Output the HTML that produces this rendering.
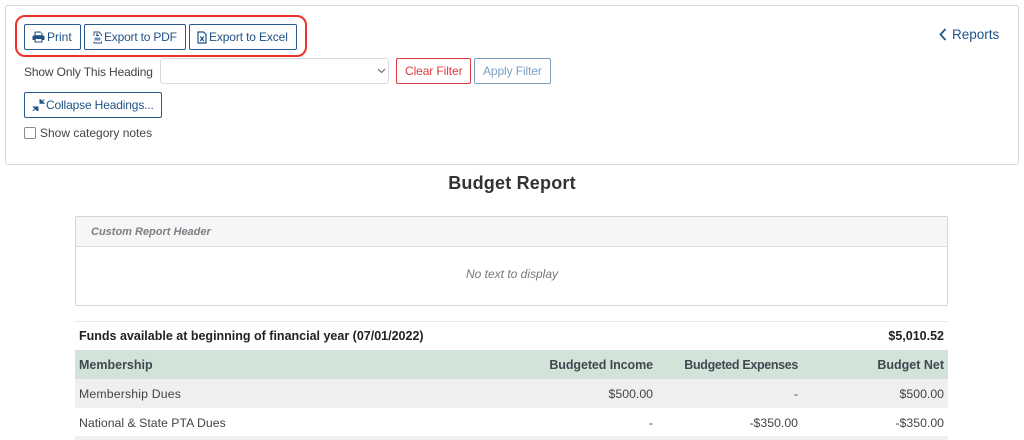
<!DOCTYPE html>
<html><head><meta charset="utf-8"><style>
html,body{margin:0;padding:0;background:#fff}
body{width:1024px;height:440px;overflow:hidden;position:relative;font-family:"Liberation Sans",sans-serif;font-size:12px;color:#333}
.a{position:absolute;box-sizing:border-box}
.t{position:absolute;white-space:nowrap;line-height:16px}
.btn{position:absolute;box-sizing:border-box;height:26px;border:1px solid #2a5a8c;border-radius:2px;color:#1f5287;background:#fff;line-height:24px;white-space:nowrap}
.r{text-align:right}
.b{font-weight:bold}
.h{font-size:12.5px;color:#3f4a50}
.c{font-size:12.3px;color:#444}
svg{position:absolute}
</style></head><body>
<div class="a" style="left:5px;top:5px;width:1014px;height:160px;border:1px solid #d9d9d9;border-radius:3px"></div>
<div class="a" style="left:15px;top:15px;width:292px;height:42px;border:2px solid #f0302a;border-radius:10px"></div>

<div class="btn" style="left:24px;top:24px;width:57px"><span class="t" style="left:22px;top:4px">Print</span>
<svg style="left:7px;top:6px" width="13" height="12" viewBox="0 0 13 12"><path d="M2.500 5V1.500a1 1 0 0 1 1-1h5l2 2V5z" fill="#1f5287"/><rect x="3.600" y="1.600" width="5.800" height="2.600" fill="#fff"/><path d="M0.500 6a1.500 1.500 0 0 1 1.500-1.500h9A1.500 1.500 0 0 1 12.500 6v3H10.500v2.500h-8V9H0.500z" fill="#1f5287"/><rect x="3.600" y="8" width="5.800" height="2.500" fill="#fff"/></svg></div>
<div class="btn" style="left:84px;top:24px;width:102px"><span class="t" style="left:19px;top:4px;letter-spacing:-.2px">Export to PDF</span>
<svg style="left:7px;top:6px" width="11" height="13" viewBox="0 0 11 13"><path d="M2 5V1h5l2.500 2.500V5M2 10.500V12h7.500v-1.500M4 3h2M4 4.500h3" fill="none" stroke="#1f5287" stroke-width=".9"/><rect x="2.500" y="6.500" width="6" height="3" fill="#6f93b8"/></svg></div>
<div class="btn" style="left:189px;top:24px;width:108px"><span class="t" style="left:19px;top:4px;letter-spacing:-.13px">Export to Excel</span>
<svg style="left:7px;top:6px" width="10" height="13" viewBox="0 0 10 13"><path d="M1 1h5.500L9 3.500V12H1z" fill="none" stroke="#1f5287" stroke-width="1.200"/><path d="M3.300 5.500l3.400 4.500M6.700 5.500l-3.400 4.500" stroke="#1f5287" stroke-width="1.200"/></svg></div>

<span class="t" style="left:24px;top:64px;color:#444;letter-spacing:-.14px">Show Only This Heading</span>
<div class="a" style="left:160px;top:58px;width:229px;height:26px;border:1px solid #d8dbe0;border-radius:3px"></div>
<svg style="left:377px;top:68px" width="9" height="6" viewBox="0 0 9 6"><path d="M1 1l3.500 3.500L8 1" fill="none" stroke="#666" stroke-width="1.100"/></svg>
<div class="btn" style="left:396px;top:58px;width:75px;border-color:#dc3a3f;color:#dc3a3f"><span class="t" style="left:8px;top:4px;letter-spacing:-.1px">Clear Filter</span></div>
<div class="btn" style="left:474px;top:58px;width:77px;border-color:#7c9fc4;color:#7c9fc4"><span class="t" style="left:8px;top:4px;letter-spacing:-.1px">Apply Filter</span></div>

<div class="btn" style="left:24px;top:92px;width:138px"><span class="t" style="left:21px;top:4px;letter-spacing:-.15px">Collapse Headings...</span>
<svg style="left:7px;top:6px" width="13" height="12" viewBox="0 0 13 12"><path d="M1.500 8h4.500v4.200z M0.800 12L3 9.800" fill="#1f5287" stroke="#1f5287" stroke-width="1"/><path d="M8 0.500v3.800h4z M9.500 3L12.200 0.500" fill="#1f5287" stroke="#1f5287" stroke-width="1"/></svg></div>
<div class="a" style="left:24px;top:127px;width:11.500px;height:11.500px;border:1px solid #8a8a8a;border-radius:2px"></div>
<span class="t" style="left:40px;top:125px;color:#444">Show category notes</span>

<svg style="left:939px;top:28px" width="8" height="13" viewBox="0 0 8 13"><path d="M6.500 1L1.500 6.500l5 5.500" fill="none" stroke="#1f5287" stroke-width="1.700"/></svg>
<span class="t" style="left:952px;top:27px;font-size:13.500px;color:#1f5287">Reports</span>

<div class="t b" style="left:0;top:172px;width:1024px;text-align:center;font-size:18px;line-height:22px;color:#333;letter-spacing:.2px">Budget Report</div>

<div class="a" style="left:75px;top:216px;width:873px;height:90px;border:1px solid #d4d4d4;border-radius:2px"></div>
<div class="a" style="left:76px;top:217px;width:871px;height:30px;background:#f6f6f6;border-bottom:1px solid #dedede"></div>
<span class="t b" style="left:91px;top:224px;font-size:11px;font-style:italic;color:#7b8087">Custom Report Header</span>
<div class="t" style="left:0;top:266px;width:1024px;text-align:center;font-size:12px;font-style:italic;color:#777">No text to display</div>

<div class="a" style="left:75px;top:321px;width:873px;height:1px;background:#e6e6e6"></div>
<div class="a" style="left:75px;top:350px;width:873px;height:29px;background:#d2e3da"></div>
<div class="a" style="left:75px;top:379px;width:873px;height:29px;background:#efefef"></div>
<div class="a" style="left:75px;top:436px;width:873px;height:4px;background:#efefef"></div>

<span class="t b" style="left:79px;top:328px;font-size:12.500px;color:#222">Funds available at beginning of financial year (07/01/2022)</span>
<div class="t r b" style="left:744px;width:200px;top:328px;font-size:12.500px;color:#222">$5,010.52</div>

<span class="t b h" style="left:79px;top:357px">Membership</span>
<div class="t r b h" style="left:453px;width:200px;top:357px;letter-spacing:-.08px">Budgeted Income</div>
<div class="t r b h" style="left:598px;width:200px;top:357px;letter-spacing:-.34px">Budgeted Expenses</div>
<div class="t r b h" style="left:744px;width:200px;top:357px">Budget Net</div>

<span class="t c" style="left:79px;top:386px;letter-spacing:.15px">Membership Dues</span>
<div class="t r c" style="left:453px;width:200px;top:386px">$500.00</div>
<div class="t r c" style="left:598px;width:200px;top:386px">-</div>
<div class="t r c" style="left:744px;width:200px;top:386px">$500.00</div>

<span class="t c" style="left:79px;top:415px">National &amp; State PTA Dues</span>
<div class="t r c" style="left:453px;width:200px;top:415px">-</div>
<div class="t r c" style="left:598px;width:200px;top:415px">-$350.00</div>
<div class="t r c" style="left:744px;width:200px;top:415px">-$350.00</div>
</body></html>
